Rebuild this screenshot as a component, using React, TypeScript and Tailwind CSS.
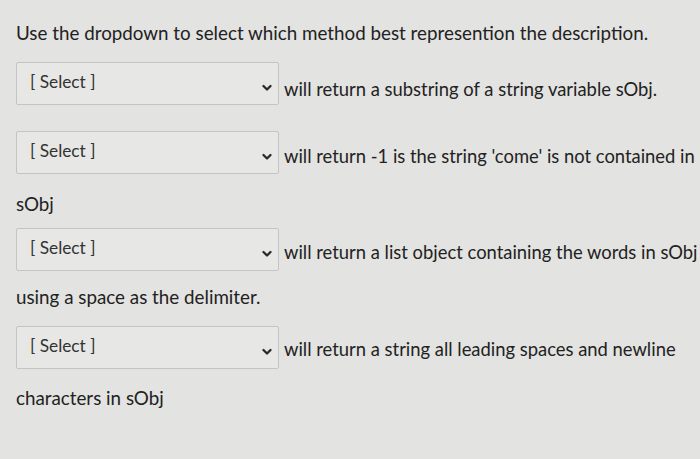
import React from "react";

const Chevron = () => (
  <svg width="10" height="8" viewBox="0 0 10 8" className="absolute right-[6px] top-[21px]">
    <path d="M1.5 2 L5 5.5 L8.5 2" fill="none" stroke="#2a2a2a" strokeWidth="2.3" strokeLinecap="round" strokeLinejoin="round" />
  </svg>
);

const SelectBox = () => (
  <div className="relative w-[263px] h-[43px] shrink-0 border border-[#c4c4c2] bg-[#e7e7e5] rounded-[2px]">
    <span className="absolute left-[13px] top-[7px] text-[17.3px] leading-[24px] text-[#333333]">[ Select ]</span>
    <Chevron />
  </div>
);

const Row: React.FC<any> = ({ text, pb = "pb-[4px]" }) => (
  <div className="flex items-end">
    <SelectBox />
    <span className={`ml-[5px] whitespace-nowrap text-[18.4px] leading-[24px] text-[#222222] ${pb}`}>{text}</span>
  </div>
);

const App = () => {
  return (
    <div
      className="w-[700px] h-[459px] overflow-hidden bg-[#e3e3e1] px-[16px] pt-[21px]"
      style={{ fontFamily: "Lato, 'Open Sans', sans-serif" }}
    >
      <div className="text-[18.8px] leading-[24px] text-[#222222] whitespace-nowrap">
        Use the dropdown to select which method best represention the description.
      </div>

      <div className="mt-[17px]">
        <Row text="will return a substring of a string variable sObj." />
      </div>

      <div className="mt-[26px]">
        <Row text="will return -1 is the string 'come' is not contained in" pb="pb-[6px]" />
      </div>
      <div className="mt-[18px] text-[18.8px] leading-[24px] text-[#222222]">sObj</div>

      <div className="mt-[12px]">
        <Row text="will return a list object containing the words in sObj" pb="pb-[7px]" />
      </div>
      <div className="mt-[14px] text-[18.8px] leading-[24px] text-[#222222]">using a space as the delimiter.</div>

      <div className="mt-[17px]">
        <Row text="will return a string all leading spaces and newline" pb="pb-[8px]" />
      </div>
      <div className="mt-[17px] text-[18.8px] leading-[24px] text-[#222222]">characters in sObj</div>
    </div>
  );
};

export default App;
